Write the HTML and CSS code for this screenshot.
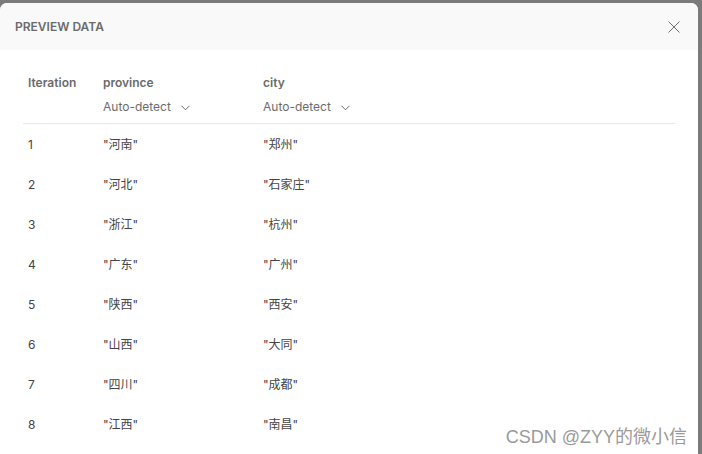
FILE: index.html
```
<!DOCTYPE html>
<html>
<head>
<meta charset="utf-8">
<link rel="stylesheet" href="styles.css">
</head>
<body>
<div class="stage">
  <div class="modal">
    <div class="modal-header">
      <span class="title">PREVIEW DATA</span>
      <svg class="close" width="12" height="12" viewBox="0 0 12 12"><path d="M0.5 0.5L11.5 11.5M11.5 0.5L0.5 11.5" stroke="#707070" stroke-width="1" fill="none"/></svg>
    </div>
    <div class="modal-body">
      <div class="table">
        <div class="row head">
          <div class="cell c1"><div class="name">Iteration</div></div>
          <div class="cell c2"><div class="name">province</div><div class="type">Auto-detect <svg class="chev" width="9" height="6" viewBox="0 0 9 6"><path d="M0.5 0.8L4.5 4.8L8.5 0.8" stroke="#6b6b6b" stroke-width="1" fill="none"/></svg></div></div>
          <div class="cell c3"><div class="name">city</div><div class="type">Auto-detect <svg class="chev" width="9" height="6" viewBox="0 0 9 6"><path d="M0.5 0.8L4.5 4.8L8.5 0.8" stroke="#6b6b6b" stroke-width="1" fill="none"/></svg></div></div>
        </div>
        <div class="row"><div class="cell c1">1</div><div class="cell c2">"河南"</div><div class="cell c3">"郑州"</div></div>
        <div class="row"><div class="cell c1">2</div><div class="cell c2">"河北"</div><div class="cell c3">"石家庄"</div></div>
        <div class="row"><div class="cell c1">3</div><div class="cell c2">"浙江"</div><div class="cell c3">"杭州"</div></div>
        <div class="row"><div class="cell c1">4</div><div class="cell c2">"广东"</div><div class="cell c3">"广州"</div></div>
        <div class="row"><div class="cell c1">5</div><div class="cell c2">"陕西"</div><div class="cell c3">"西安"</div></div>
        <div class="row"><div class="cell c1">6</div><div class="cell c2">"山西"</div><div class="cell c3">"大同"</div></div>
        <div class="row"><div class="cell c1">7</div><div class="cell c2">"四川"</div><div class="cell c3">"成都"</div></div>
        <div class="row"><div class="cell c1">8</div><div class="cell c2">"江西"</div><div class="cell c3">"南昌"</div></div>
      </div>
    </div>
  </div>
  <div class="watermark">CSDN @ZYY的微小信</div>
</div>
</body>
</html>
```
FILE: styles.css
```
html, body {
  margin: 0;
  padding: 0;
  width: 702px;
  height: 454px;
  overflow: hidden;
  background: #7b7b7b;
  font-family: Inter, "Noto Sans CJK SC", sans-serif;
}
.stage {
  position: relative;
  width: 702px;
  height: 454px;
  padding-top: 3px;
  box-sizing: border-box;
}
.modal {
  width: 698px;
  height: 451px;
  background: #ffffff;
  border-radius: 7px 7px 0 0;
  overflow: hidden;
}
.modal-header {
  height: 47px;
  background: #f9f9f9;
  display: flex;
  align-items: center;
  justify-content: space-between;
  padding: 0 18px 0 15px;
}
.title {
  font-size: 12px;
  font-weight: 600;
  color: #6b6b6b;
}
.close {
  display: block;
}
.modal-body {
  padding: 25px 23px 0 23px;
}
.table {
  width: 652px;
}
.row {
  display: flex;
  height: 40px;
  align-items: center;
  font-size: 12px;
  color: #444444;
  line-height: 16px;
  padding-top: 1px;
  box-sizing: border-box;
}
.row.head {
  height: auto;
  align-items: flex-start;
  padding-top: 0;
  padding-bottom: 8px;
  border-bottom: 1px solid #e8e8e8;
}
.cell {
  padding-left: 5px;
  box-sizing: border-box;
}
.c1 { width: 75px; }
.c2 { width: 160px; }
.c3 { flex: 1; }
.name {
  font-size: 12px;
  font-weight: 600;
  color: #6b6b6b;
  line-height: 16px;
}
.type {
  margin-top: 8px;
  font-size: 12px;
  color: #6b6b6b;
  line-height: 16px;
  display: flex;
  align-items: center;
  gap: 10px;
}
.chev {
  display: block;
  margin-top: 1px;
}
.watermark {
  position: absolute;
  right: 15px;
  bottom: 6px;
  font-family: "Liberation Sans", "Noto Sans CJK SC", sans-serif;
  font-size: 18px;
  color: #9a9a9a;
  white-space: nowrap;
}
```
